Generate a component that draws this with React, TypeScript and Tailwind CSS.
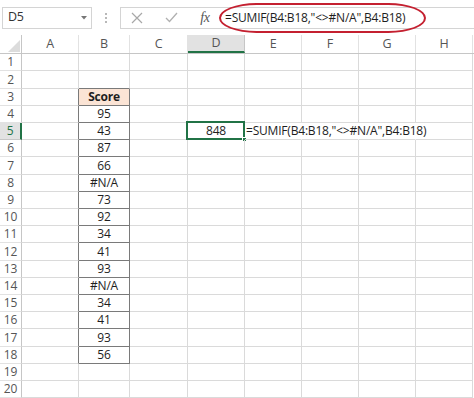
import React from "react";

const cols = [
  { l: "A", w: "w-[57px]" },
  { l: "B", w: "w-[51px]" },
  { l: "C", w: "w-[58px]" },
  { l: "D", w: "w-[57px]" },
  { l: "E", w: "w-[57px]" },
  { l: "F", w: "w-[57px]" },
  { l: "G", w: "w-[57px]" },
  { l: "H", w: "w-[57px]" },
];

const bVals: Record<number, string> = {
  3: "Score",
  4: "95",
  5: "43",
  6: "87",
  7: "66",
  8: "#N/A",
  9: "73",
  10: "92",
  11: "34",
  12: "41",
  13: "93",
  14: "#N/A",
  15: "34",
  16: "41",
  17: "93",
  18: "56",
};

const tall = new Set([2, 7, 12, 17]);

function Cell({ row, ci, w }: { row: number; ci: number; w: string }) {
  const col = cols[ci].l;
  const inTable = row >= 3 && row <= 18;
  let rightCls = "border-r border-r-[#dadada]";
  let bottomCls = "border-b border-b-[#dadada]";
  if (col === "A" && inTable) rightCls = "border-r border-r-[#7a7a7a]";
  if (col === "B" && inTable) {
    rightCls = "border-r border-r-[#7a7a7a]";
    bottomCls = "border-b border-b-[#7a7a7a]";
  }
  if (col === "B" && row === 2) bottomCls = "border-b border-b-[#7a7a7a]";
  if (row === 5 && (col === "E" || col === "F" || col === "G")) rightCls = "border-r border-r-transparent";

  const isHeader = col === "B" && row === 3;
  const bg = isHeader ? "bg-[#fbe4d5]" : "";
  const val = col === "B" ? bVals[row] : undefined;

  return (
    <div className={`${w} shrink-0 h-full relative flex items-center ${rightCls} ${bottomCls} ${bg}`}>
      {val && (
        <span className={`w-full text-center text-[#1e1e1e] ${isHeader ? "font-bold" : ""}`}>{val}</span>
      )}
      {col === "D" && row === 5 && (
        <>
          <span className="w-full text-center text-[#1e1e1e]">848</span>
          <div className="absolute left-[-2px] top-[-2px] right-[-1px] bottom-[-1px] border-2 border-[#217346]" />
          <div className="absolute right-[-3px] bottom-[-3px] w-[5px] h-[5px] bg-[#217346] border border-white" />
        </>
      )}
      {col === "E" && row === 5 && (
        <span className="absolute left-[1px] whitespace-nowrap text-[#1e1e1e] z-10">
          =SUMIF(B4:B18,"&lt;&gt;#N/A",B4:B18)
        </span>
      )}
    </div>
  );
}

export default function App() {
  const rows = Array.from({ length: 20 }, (_, i) => i + 1);
  return (
    <div
      className="w-[474px] h-[398px] bg-white overflow-hidden relative text-[12px] tracking-[-0.2px]"
      style={{ fontFamily: '"Open Sans", "Noto Sans", sans-serif' }}
    >
      {/* formula bar */}
      <div className="h-[35px] flex items-center relative">
        <div className="ml-[2px] w-[90px] h-[22px] border border-[#d4d4d4] flex items-center justify-between pl-[5px] pr-[4px] text-[#333] text-[12.5px]">
          <span>D5</span>
          <svg width="6" height="4" viewBox="0 0 6 4">
            <path d="M0 0 L6 0 L3 3.5 Z" fill="#777" />
          </svg>
        </div>
        <div className="w-[28px] flex flex-col items-center gap-[2px]">
          <div className="w-[2px] h-[2px] bg-[#b8b8b8]" />
          <div className="w-[2px] h-[2px] bg-[#b8b8b8]" />
          <div className="w-[2px] h-[2px] bg-[#b8b8b8]" />
        </div>
        <div className="flex-1 h-[22px] border border-r-0 border-[#d4d4d4] flex items-center">
          <div className="w-[30px] flex justify-center ml-[1px]">
            <svg width="12" height="12" viewBox="0 0 12 12">
              <path d="M1 1 L11 11 M11 1 L1 11" stroke="#a8a8a8" strokeWidth="1.2" />
            </svg>
          </div>
          <div className="w-[38px] flex justify-center">
            <svg width="13" height="11" viewBox="0 0 13 11">
              <path d="M1 6 L4.5 9.5 L12 1" stroke="#b0b0b0" strokeWidth="1.3" fill="none" />
            </svg>
          </div>
          <div className="w-[30px] flex justify-center">
            <span
              className="italic text-[#555] text-[14px]"
              style={{ fontFamily: '"Liberation Serif", serif' }}
            >
              fx
            </span>
          </div>
          <span className="ml-[5px] whitespace-nowrap text-[#1e1e1e]">=SUMIF(B4:B18,"&lt;&gt;#N/A",B4:B18)</span>
        </div>
        <div className="absolute left-[219px] top-[3px] w-[207px] h-[30px] border-2 border-[#c42030] rounded-[40px/16px]" />
      </div>

      {/* column headers */}
      <div className="h-[19px] flex border-b border-b-[#c6c6c6]">
        <div className="w-[22px] shrink-0 h-full border-r border-r-[#c6c6c6] flex items-end justify-end pr-[1px] pb-[1px]">
          <svg width="12" height="12" viewBox="0 0 12 12">
            <path d="M12 0 L12 12 L0 12 Z" fill="#dcdcdc" />
          </svg>
        </div>
        {cols.map((c) => (
          <div
            key={c.l}
            className={`${c.w} shrink-0 h-full flex items-center justify-center text-[#555] text-[12.5px] ${
              c.l === "D"
                ? "bg-[#e2e2e2] border-b-2 border-b-[#217346] border-r border-r-[#c6c6c6] -mb-[1px]"
                : "border-r border-r-[#e2e2e2]"
            }`}
          >
            {c.l}
          </div>
        ))}
      </div>

      {rows.map((r) => (
        <div key={r} className={`${tall.has(r) ? "h-[18px]" : "h-[17px]"} flex`}>
          <div
            className={`w-[22px] shrink-0 h-full flex items-center justify-center border-b ${
              r === 5
                ? "bg-[#e2e2e2] text-[#217346] border-r-2 border-r-[#217346] border-b-[#c6c6c6]"
                : "text-[#555] border-r border-r-[#c6c6c6] border-b-[#e2e2e2]"
            }`}
          >
            {r}
          </div>
          {cols.map((c, ci) => (
            <Cell key={c.l} row={r} ci={ci} w={c.w} />
          ))}
        </div>
      ))}
    </div>
  );
}
